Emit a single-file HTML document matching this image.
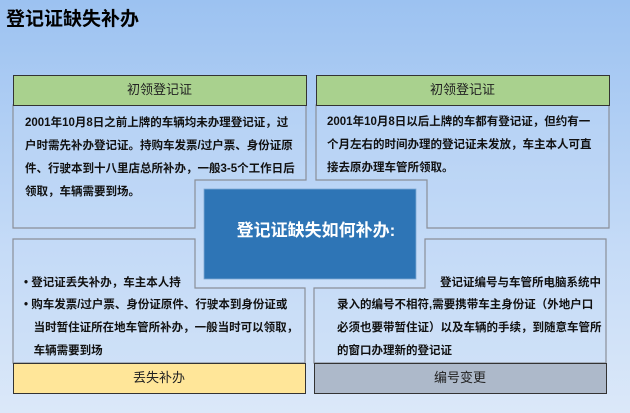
<!DOCTYPE html>
<html><head><meta charset="utf-8"><style>
*{margin:0;padding:0}
body{width:630px;height:413px;overflow:hidden;position:relative;background:linear-gradient(#9cc2f1,#c5dbf7 60%,#dbe8f9);font-family:"Liberation Sans","Noto Sans CJK SC",sans-serif;color:#111}
.a{position:absolute}
.t{font-size:11.5px;font-weight:bold;line-height:23px;white-space:nowrap}
.h{font-size:13px;text-align:center;line-height:30px;color:#222}
</style></head><body>
<div class="a" style="left:6px;top:4px;font-size:19px;font-weight:bold;color:#000">登记证缺失补办</div>
<svg class="a" style="left:0;top:0" width="630" height="413">
<g fill="#c4dbf7" fill-opacity=".35" stroke="#8a8f98" stroke-width="1.2">
<polygon points="13,105 306,105 306,180 195,180 195,228 13,228"/>
<polygon points="316,105 609,105 609,228 427,228 427,180 316,180"/>
<polygon points="13,239 195,239 195,288 305,288 305,363 13,363"/>
<polygon points="425,239 606,239 606,363 314,363 314,288 425,288"/>
</g>
<rect x="13.5" y="75.5" width="293" height="30" fill="#a9d18e" stroke="#333"/>
<rect x="316.5" y="75.5" width="293" height="30" fill="#a9d18e" stroke="#333"/>
<rect x="13.5" y="363.5" width="292" height="30" fill="#ffe699" stroke="#333"/>
<rect x="314.5" y="363.5" width="292" height="30" fill="#adb9ca" stroke="#333"/>
<rect x="204" y="189" width="212" height="90" fill="#2e75b6" stroke="#7fa9d4" stroke-width=".8"/>
</svg>
<div class="a h" style="left:13px;top:75px;width:293px">初领登记证</div>
<div class="a h" style="left:316px;top:75px;width:293px">初领登记证</div>
<div class="a h" style="left:13px;top:363px;width:292px">丢失补办</div>
<div class="a h" style="left:314px;top:363px;width:292px">编号变更</div>
<div class="a" style="left:210px;top:186px;width:212px;height:90px;line-height:90px;text-align:center;color:#fff;font-size:17px;font-weight:bold">登记证缺失如何补办:</div>
<div class="a t" style="left:25px;top:112px">2001年10月8日之前上牌的车辆均未办理登记证，过<br>户时需先补办登记证。持购车发票/过户票、身份证原<br>件、行驶本到十八里店总所补办，一般3-5个工作日后<br>领取，车辆需要到场。</div>
<div class="a t" style="left:327px;top:111px">2001年10月8日以后上牌的车都有登记证，但约有一<br>个月左右的时间办理的登记证未发放，车主本人可直<br>接去原办理车管所领取。</div>
<div class="a t" style="left:24px;top:272px">• 登记证丢失补办，车主本人持</div>
<div class="a t" style="left:24px;top:294px">• 购车发票/过户票、身份证原件、行驶本到身份证或<br>&nbsp;&nbsp;&nbsp;当时暂住证所在地车管所补办，一般当时可以领取，<br>&nbsp;&nbsp;&nbsp;车辆需要到场</div>
<div class="a t" style="left:440px;top:272px">登记证编号与车管所电脑系统中</div>
<div class="a t" style="left:337px;top:294px">录入的编号不相符,需要携带车主身份证（外地户口<br>必须也要带暂住证）以及车辆的手续，到随意车管所<br>的窗口办理新的登记证</div>
</body></html>
